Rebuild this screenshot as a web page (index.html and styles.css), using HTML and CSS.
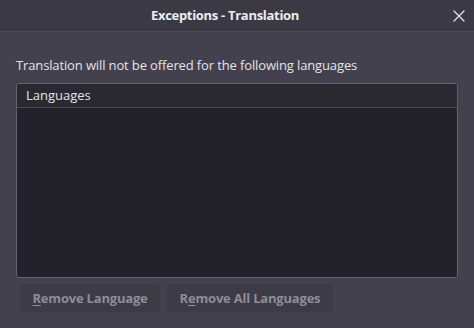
FILE: index.html
```html
<!DOCTYPE html>
<html>
<head>
<meta charset="utf-8">
<link rel="stylesheet" href="styles.css">
</head>
<body>
<div class="window">
  <header class="titlebar">
    <span class="title">Exceptions - Translation</span>
    <button class="close" aria-label="Close">
      <svg width="14" height="14" viewBox="0 0 14 14"><path d="M2 2 L12 12 M12 2 L2 12" stroke="#e4e3ea" stroke-width="1.3" stroke-linecap="round"/></svg>
    </button>
  </header>
  <main class="content">
    <p class="desc">Translation will not be offered for the following languages</p>
    <div class="list">
      <div class="list-head">Languages</div>
      <div class="list-body"></div>
    </div>
    <div class="actions">
      <button class="btn btn-one" disabled><u>R</u>emove Language</button>
      <button class="btn btn-two" disabled>R<u>e</u>move All Languages</button>
    </div>
  </main>
</div>
</body>
</html>
```
FILE: styles.css
```css
html, body {
  margin: 0;
  padding: 0;
  background: #42414d;
}
.window {
  width: 474px;
  height: 328px;
  display: flex;
  flex-direction: column;
  font-family: "Open Sans", "DejaVu Sans", sans-serif;
  color: #e8e7ee;
}
.titlebar {
  height: 31px;
  border-bottom: 1px solid #57566180;
  background: #3b3a44;
  display: flex;
  align-items: center;
  justify-content: center;
  padding-right: 24px;
  position: relative;
}
.title {
  font-weight: 700;
  font-size: 13px;
  color: #ecebf1;
  margin-top: -1px;
  letter-spacing: -0.3px;
}
.close {
  position: absolute;
  right: 5px;
  top: 6px;
  width: 20px;
  height: 20px;
  padding: 0;
  border: 0;
  background: none;
  display: flex;
  align-items: center;
  justify-content: center;
}
.content {
  flex: 1;
  padding: 0 16px 0 16px;
  display: flex;
  flex-direction: column;
}
.desc {
  margin: 23px 0 0 0;
  font-size: 13px;
  line-height: 20px;
  color: #e4e3ea;
  letter-spacing: -0.13px;
}
.list {
  margin-top: 8px;
  height: 193px;
  border: 1px solid #64636e;
  border-radius: 3px;
  background: #23222b;
  display: flex;
  flex-direction: column;
  overflow: hidden;
}
.list-head {
  height: 24px;
  line-height: 23px;
  padding-left: 9px;
  font-size: 13px;
  color: #e4e3ea;
  background: #2a2932;
  border-bottom: 1px solid #4a4954;
  box-sizing: border-box;
}
.list-body {
  flex: 1;
}
.actions {
  display: flex;
  gap: 7px;
  margin-top: 6px;
  padding-left: 4px;
}
.btn {
  height: 28px;
  border: 0;
  border-radius: 3px;
  background: #3c3b46;
  color: #8e8d98;
  font-family: "Open Sans", "DejaVu Sans", sans-serif;
  font-weight: 700;
  font-size: 13px;
  letter-spacing: -0.2px;
  padding: 0;
}
.btn u {
  text-decoration-thickness: 1px;
  text-underline-offset: 2px;
}
.btn-one { width: 140px; }
.btn-two { width: 166px; }
```
